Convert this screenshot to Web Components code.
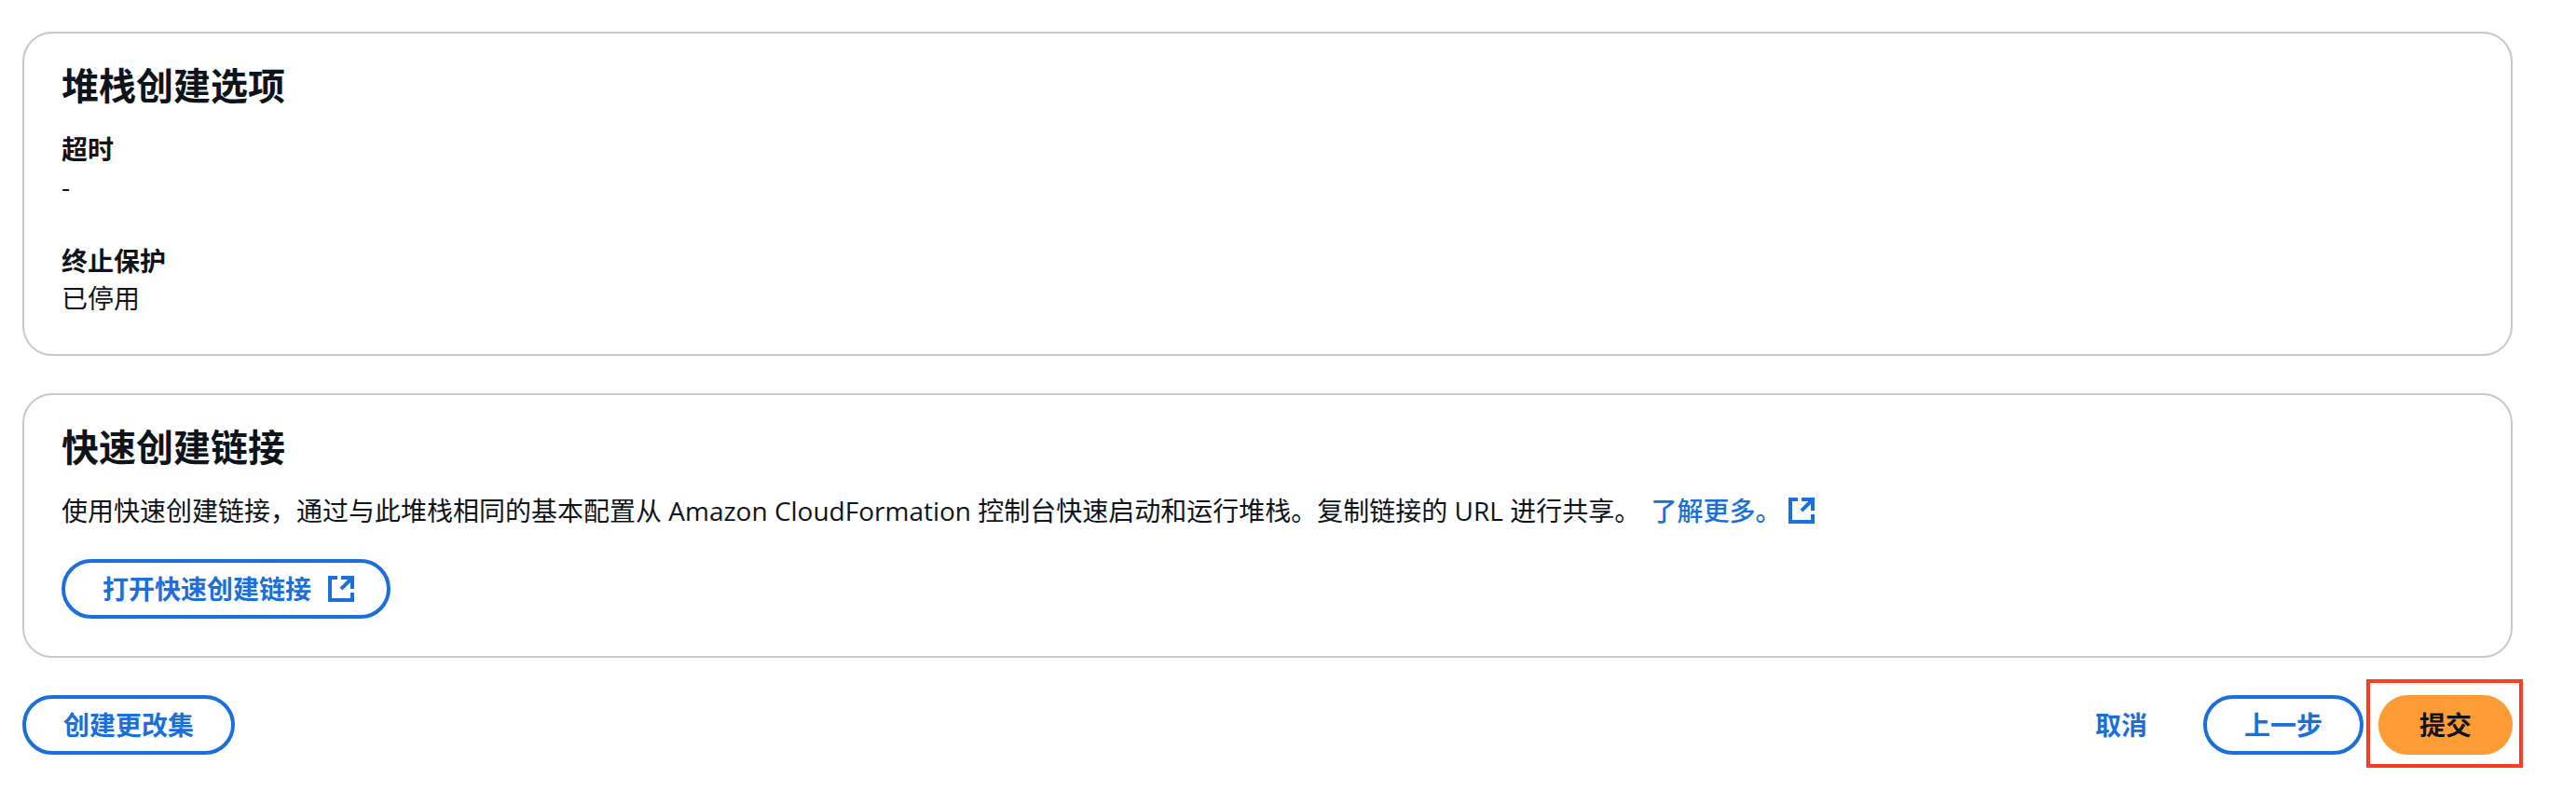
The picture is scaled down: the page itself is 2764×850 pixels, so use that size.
<!DOCTYPE html>
<html lang="zh-CN">
<head>
<meta charset="utf-8">
<title>堆栈创建选项</title>
<style>
html, body { margin: 0; background: #fff; }
body {
	font-family: "Open Sans", "Noto Sans CJK SC", sans-serif;
	color: #0f141a;
}
</style>
</head>
<body>
<review-page>
	<info-card heading="堆栈创建选项">
		<key-value label="超时">-</key-value>
		<key-value label="终止保护" style="margin-top: 40px">已停用</key-value>
	</info-card>
	<info-card heading="快速创建链接">
		<p style="margin: 0; font-size: 28px; line-height: 40px">使用快速创建链接，通过与此堆栈相同的基本配置从 Amazon CloudFormation 控制台快速启动和运行堆栈。复制链接的 URL 进行共享。<ext-link>了解更多。</ext-link></p>
		<aws-button style="margin-top: 32px; --pad-right: 33px">打开快速创建链接<ext-icon style="margin-left: 16px"></ext-icon></aws-button>
	</info-card>
	<action-bar>
		<aws-button slot="left">创建更改集</aws-button>
		<aws-button variant="link">取消</aws-button>
		<aws-button>上一步</aws-button>
		<aws-button variant="primary" marked>提交</aws-button>
	</action-bar>
</review-page>

<script>
const blue = '#1b6fdb';

class ReviewPage extends HTMLElement {
	connectedCallback() {
		this.attachShadow({ mode: 'open' }).innerHTML = `
<style>
:host {
	display: flex;
	flex-direction: column;
	gap: 40px;
	box-sizing: border-box;
	min-height: 850px;
	padding: 34px 68px 0 24px;
}
</style>
<slot></slot>`;
	}
}

class InfoCard extends HTMLElement {
	connectedCallback() {
		this.attachShadow({ mode: 'open' }).innerHTML = `
<style>
:host {
	display: block;
	border: 2px solid #c7c7cf;
	border-radius: 32px;
	padding: 32px 40px 40px;
}
h2 {
	margin: 0 0 24px;
	font-size: 40px;
	line-height: 48px;
	font-weight: 700;
}
</style>
<h2>${this.getAttribute('heading') || ''}</h2>
<slot></slot>`;
	}
}

class KeyValue extends HTMLElement {
	connectedCallback() {
		this.attachShadow({ mode: 'open' }).innerHTML = `
<style>
:host {
	display: block;
	font-size: 28px;
	line-height: 40px;
}
.label { font-weight: 700; }
</style>
<div class="label">${this.getAttribute('label') || ''}</div>
<div><slot></slot></div>`;
	}
}

class ExtIcon extends HTMLElement {
	connectedCallback() {
		this.attachShadow({ mode: 'open' }).innerHTML = `
<style>
:host {
	display: inline-block;
	width: 32px;
	height: 32px;
	flex: none;
	vertical-align: -5px;
}
svg { display: block; width: 100%; height: 100%; }
</style>
<svg viewBox="0 0 16 16" fill="none" stroke="currentColor" stroke-width="2">
	<path d="M14 8.01v-6H8M14.02 2 8 8.02M6 2.01H2v12h12V10"></path>
</svg>`;
	}
}

class ExtLink extends HTMLElement {
	connectedCallback() {
		this.attachShadow({ mode: 'open' }).innerHTML = `
<style>
:host {
	color: ${blue};
	font-weight: 500;
	margin-left: 4px;
}
ext-icon { margin-left: 6px; }
</style>
<slot></slot><ext-icon></ext-icon>`;
	}
}

class AwsButton extends HTMLElement {
	connectedCallback() {
		this.attachShadow({ mode: 'open' }).innerHTML = `
<style>
:host {
	display: inline-flex;
	align-items: center;
	box-sizing: border-box;
	height: 64px;
	padding: 0 var(--pad-right, 40px) 0 40px;
	border: 4px solid ${blue};
	border-radius: 32px;
	color: ${blue};
	font-size: 28px;
	line-height: 40px;
	font-weight: 700;
	position: relative;
}
:host([variant="link"]) { border-color: transparent; }
:host([variant="primary"]) {
	background: #fd9c35;
	border-color: #fd9c35;
	color: #0f141a;
}
.mark {
	display: none;
	position: absolute;
	left: -17px;
	top: -21px;
	right: -15px;
	bottom: -18px;
	border: 4px solid #ff3b24;
}
:host([marked]) .mark { display: block; }
</style>
<slot></slot><span class="mark"></span>`;
	}
}

class ActionBar extends HTMLElement {
	connectedCallback() {
		this.attachShadow({ mode: 'open' }).innerHTML = `
<style>
:host {
	display: flex;
	align-items: center;
	gap: 16px;
}
.left { margin-right: auto; }
</style>
<div class="left"><slot name="left"></slot></div>
<slot></slot>`;
	}
}

customElements.define('review-page', ReviewPage);
customElements.define('info-card', InfoCard);
customElements.define('key-value', KeyValue);
customElements.define('ext-icon', ExtIcon);
customElements.define('ext-link', ExtLink);
customElements.define('aws-button', AwsButton);
customElements.define('action-bar', ActionBar);
</script>
</body>
</html>
